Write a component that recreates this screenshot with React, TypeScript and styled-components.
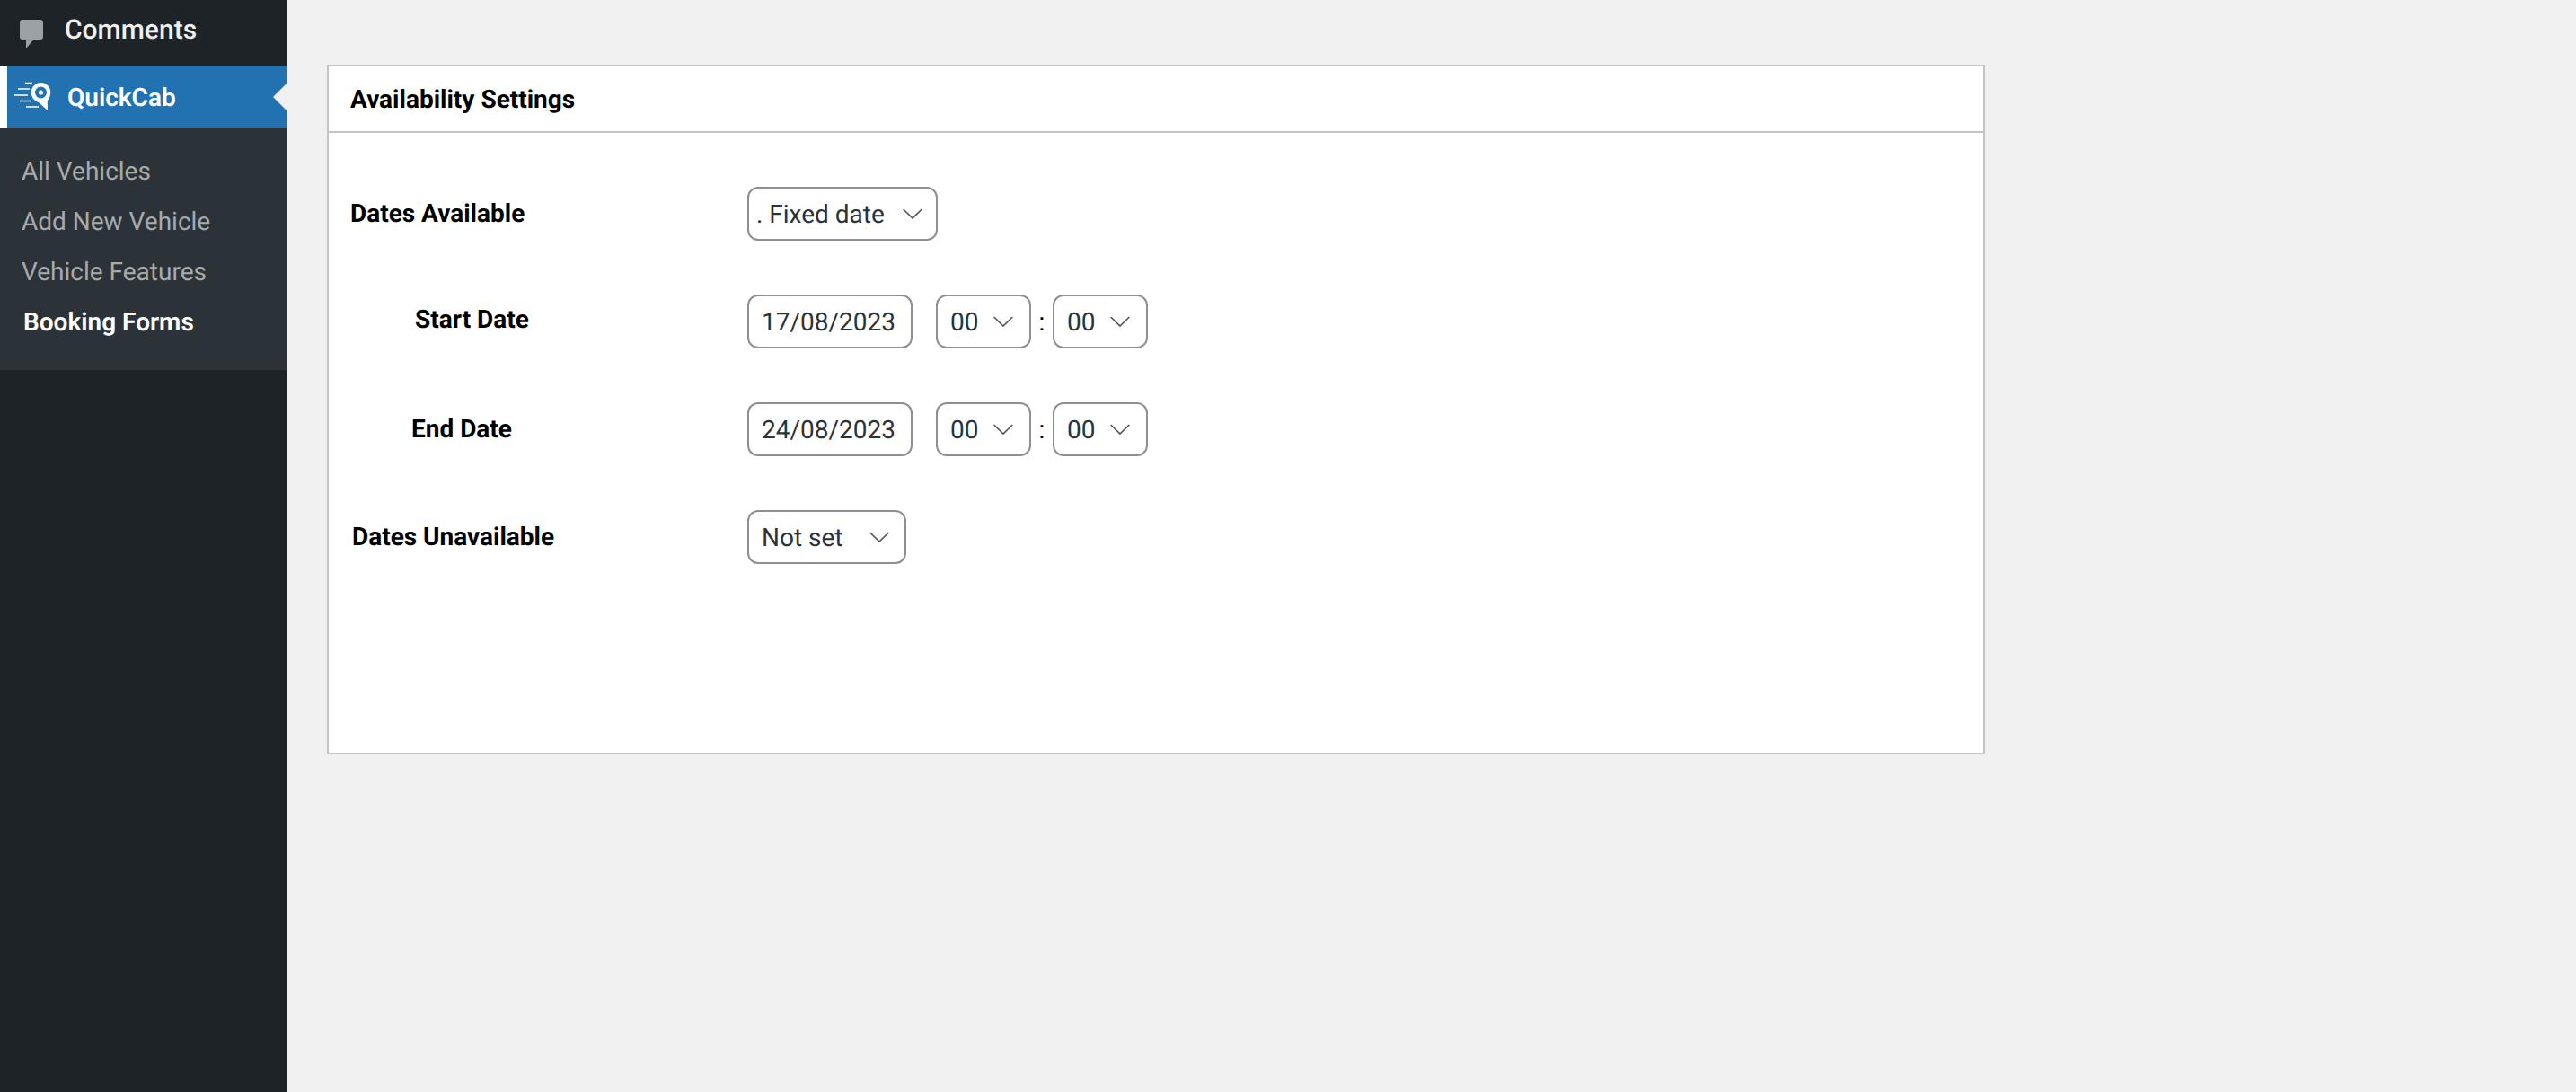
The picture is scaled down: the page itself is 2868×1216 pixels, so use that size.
import React from "react";
import styled, { createGlobalStyle } from "styled-components";

const Global = createGlobalStyle`
  html, body { margin: 0; padding: 0; background: #f0f0f1; }
  body { font-family: Roboto, "Liberation Sans", sans-serif; text-rendering: geometricPrecision; }
`;

const Page = styled.div`
  display: flex;
  width: 2868px;
  height: 1216px;
  overflow: hidden;
  background: #f0f0f1;
`;

const Sidebar = styled.nav`
  width: 320px;
  flex: none;
  background: #1d2327;
`;

const CommentsItem = styled.div`
  height: 74px;
  display: flex;
  align-items: center;
  padding-left: 22px;
  box-sizing: border-box;
  svg { margin: 2px 24px 0 0; flex: none; }
`;

const CommentsLabel = styled.span`
  color: #f0f0f1;
  font-size: 30px;
  font-weight: 500;
  margin-bottom: 7px;
`;

const ActiveItem = styled.div`
  position: relative;
  height: 68px;
  display: flex;
  align-items: center;
  box-sizing: border-box;
  border-left: 8px solid #fff;
  padding-left: 4px;
  background: #2271b1;
  color: #fff;
  font-size: 28px;
  font-weight: 600;
  svg { margin-right: 15px; flex: none; }
`;

const Notch = styled.span`
  position: absolute;
  right: 0;
  top: 18px;
  width: 0;
  height: 0;
  border-top: 16px solid transparent;
  border-bottom: 16px solid transparent;
  border-right: 16px solid #f0f0f1;
`;

const SubMenu = styled.div`
  background: #2c3338;
  padding: 20px 0 26px;
`;

const SubItem = styled.div<{ $current?: boolean }>`
  height: 56px;
  display: flex;
  align-items: center;
  padding-left: ${(p) => (p.$current ? 26 : 24)}px;
  font-size: 28px;
  font-weight: ${(p) => (p.$current ? 600 : 400)};
  color: ${(p) => (p.$current ? "#fff" : "#a7aaad")};
`;

const Main = styled.main`
  flex: none;
  padding: 72px 0 0 44px;
`;

const Panel = styled.section`
  width: 1846px;
  height: 768px;
  box-sizing: border-box;
  background: #fff;
  border: 2px solid #c3c4c7;
`;

const PanelHeader = styled.h2`
  margin: 0;
  height: 74px;
  box-sizing: border-box;
  border-bottom: 2px solid #c3c4c7;
  padding-left: 24px;
  display: flex;
  align-items: center;
  font-size: 28px;
  font-weight: 700;
  color: #000;
`;

const PanelBody = styled.div`
  padding: 60px 0 0 24px;
  display: flex;
  flex-direction: column;
  gap: 60px;
`;

const Row = styled.div`
  display: flex;
  align-items: center;
  height: 60px;
`;

const Label = styled.label<{ $indent: number; $lift: number }>`
  width: 442px;
  flex: none;
  box-sizing: border-box;
  padding-left: ${(p) => p.$indent}px;
  padding-bottom: ${(p) => p.$lift}px;
  font-size: 28px;
  font-weight: 700;
  color: #000;
`;

const Control = styled.div<{ $width: number; $left?: number; $right?: number }>`
  width: ${(p) => p.$width}px;
  height: 60px;
  box-sizing: border-box;
  display: flex;
  align-items: center;
  justify-content: space-between;
  flex: none;
  padding: 0 ${(p) => p.$right ?? 18}px 0 ${(p) => p.$left ?? 14}px;
  border: 2px solid #8c8f94;
  border-radius: 12px;
  background: #fff;
  color: #2c3338;
  font-size: 28px;
`;

const TimeGap = styled.span`
  width: 26px;
  flex: none;
`;

const Colon = styled.span`
  width: 24px;
  flex: none;
  text-align: center;
  font-size: 28px;
  color: #000;
`;

const Chevron = () => (
  <svg width="22" height="12" viewBox="0 0 22 12" fill="none">
    <path d="M.7 1 11 11 21.300 1" stroke="#50575e" strokeWidth="1.700" />
  </svg>
);

const CommentIcon = () => (
  <svg width="26" height="32" viewBox="0 0 26 32">
    <path
      d="M3 0h20a3 3 0 0 1 3 3v16a3 3 0 0 1-3 3H15.500L7 32V22H3a3 3 0 0 1-3-3V3a3 3 0 0 1 3-3Z"
      fill="#9ca1a7"
    />
  </svg>
);

const CabIcon = () => (
  <svg width="48" height="40" viewBox="0 0 48 40">
    <g stroke="#fff" strokeWidth="1.600">
      <path d="M16 4.500h8M8 11h13M4 18h15M10 24.500h12M17 31h14" fill="none" />
    </g>
    <path
      d="M33.500 4a10.800 10.800 0 0 1 10.800 10.800c0 4-1.600 7-3.600 9.200L41 35 31 26c-5-1.500-8.300-6-8.300-11.200A10.800 10.800 0 0 1 33.500 4Z"
      fill="#fff"
    />
    <circle cx="33.500" cy="15" r="6.500" fill="#2271b1" />
    <circle cx="33.500" cy="15" r="2.600" fill="#fff" />
  </svg>
);

const DateRow = ({ label, indent, lift, date }: { label: string; indent: number; lift: number; date: string }) => (
  <Row>
    <Label $indent={indent} $lift={lift}>{label}</Label>
    <Control $width={184}>{date}</Control>
    <TimeGap />
    <Control $width={106} $right={18}>00<Chevron /></Control>
    <Colon>:</Colon>
    <Control $width={106} $right={18}>00<Chevron /></Control>
  </Row>
);

export default function App() {
  return (
    <>
      <Global />
      <Page>
        <Sidebar>
          <CommentsItem><CommentIcon /><CommentsLabel>Comments</CommentsLabel></CommentsItem>
          <ActiveItem><CabIcon />QuickCab<Notch /></ActiveItem>
          <SubMenu>
            <SubItem>All Vehicles</SubItem>
            <SubItem>Add New Vehicle</SubItem>
            <SubItem>Vehicle Features</SubItem>
            <SubItem $current>Booking Forms</SubItem>
          </SubMenu>
        </Sidebar>
        <Main>
          <Panel>
            <PanelHeader>Availability Settings</PanelHeader>
            <PanelBody>
              <Row>
                <Label $indent={0} $lift={2}>Dates Available</Label>
                <Control $width={212} $left={8} $right={15}>. Fixed date<Chevron /></Control>
              </Row>
              <DateRow label="Start Date" indent={72} lift={6} date="17/08/2023" />
              <DateRow label="End Date" indent={68} lift={2} date="24/08/2023" />
              <Row>
                <Label $indent={2} $lift={2}>Dates Unavailable</Label>
                <Control $width={177} $right={17}>Not set<Chevron /></Control>
              </Row>
            </PanelBody>
          </Panel>
        </Main>
      </Page>
    </>
  );
}
